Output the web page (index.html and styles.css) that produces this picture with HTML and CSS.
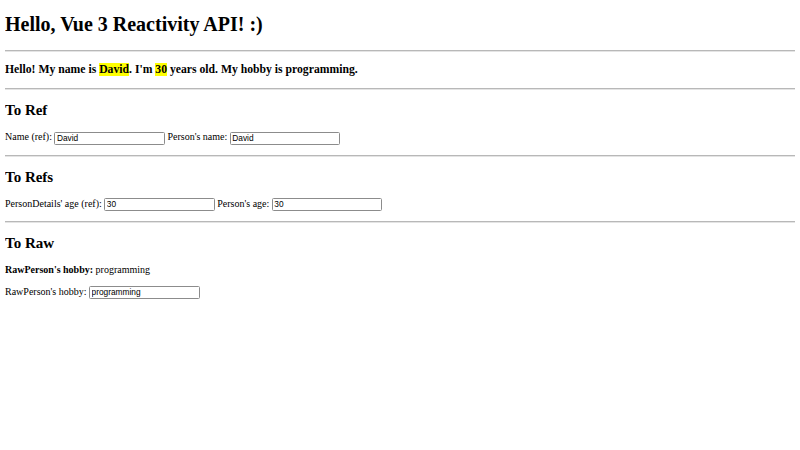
FILE: index.html
```html
<!DOCTYPE html>
<html lang="en">
<head>
<meta charset="utf-8">
<title>Vue 3 Reactivity API</title>
<link rel="stylesheet" href="styles.css">
</head>
<body>
<div class="app">
  <h1 class="title">Hello, Vue 3 Reactivity API! :)</h1>
  <hr class="rule">
  <h3 class="intro">Hello! My name is <mark class="hl">David</mark>. I'm <mark class="hl">30</mark> years old. My hobby is programming.</h3>
  <hr class="rule">
  <h2 class="section">To Ref</h2>
  <p class="row">Name (ref): <input class="field" type="text" value="David"> Person's name: <input class="field" type="text" value="David"></p>
  <hr class="rule">
  <h2 class="section">To Refs</h2>
  <p class="row">PersonDetails' age (ref): <input class="field" type="text" value="30"> Person's age: <input class="field" type="text" value="30"></p>
  <hr class="rule">
  <h2 class="section">To Raw</h2>
  <p class="row"><strong class="label">RawPerson's hobby:</strong> programming</p>
  <p class="row">RawPerson's hobby: <input class="field" type="text" value="programming"></p>
</div>
</body>
</html>
```

FILE: styles.css
```css
html, body {
  background: #fff;
}
body {
  margin: 0 5px 5px;
  font-family: "Liberation Serif", "Times New Roman", serif;
  font-size: 10px;
  color: #000;
}
.app {
  padding-top: 0.1px;
}
.title {
  font-size: 20px;
  font-weight: bold;
  margin: 13.4px 0 13.6px;
  line-height: 23px;
}
.rule {
  height: 0;
  margin: 5px 0;
  border: 0;
  border-top: 1px solid #b8b8b8;
  border-bottom: 1px solid #e4e4e4;
}
.intro {
  font-size: 11.7px;
  font-weight: bold;
  margin: 11.3px 0;
  line-height: 13.4px;
}
.hl {
  background: #ffff00;
  color: #000;
}
.section {
  font-size: 15px;
  font-weight: bold;
  margin: 12px 0;
  line-height: 17.25px;
}
.row {
  margin: 10px 0;
  line-height: 11.5px;
}
.label {
  font-weight: bold;
}
.field {
  box-sizing: border-box;
  width: 110.5px;
  height: 13px;
  padding: 0 1.5px;
  margin: 0;
  border: 1px solid #8c8c8c;
  border-radius: 1.5px;
  font-family: "Liberation Sans", Arial, sans-serif;
  font-size: 8.33px;
  color: #000;
  background: #fff;
  vertical-align: middle;
}
```
